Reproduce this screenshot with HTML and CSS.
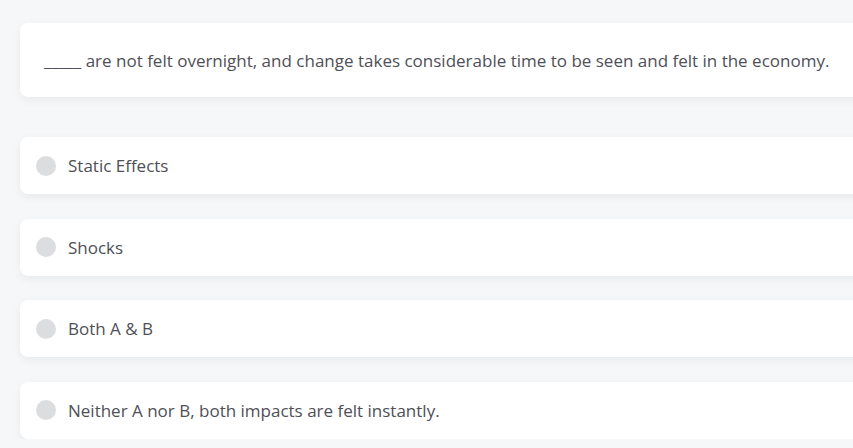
FILE: index.html
```html
<!DOCTYPE html>
<html>
<head>
<meta charset="utf-8">
<link rel="stylesheet" href="styles.css">
</head>
<body>
<main class="quiz">
  <section class="question">
    <p class="question-text">_____ are not felt overnight, and change takes considerable time to be seen and felt in the economy.</p>
  </section>
  <ul class="options">
    <li class="option"><span class="radio"></span><span class="label">Static Effects</span></li>
    <li class="option"><span class="radio"></span><span class="label">Shocks</span></li>
    <li class="option"><span class="radio"></span><span class="label">Both A &amp; B</span></li>
    <li class="option"><span class="radio"></span><span class="label">Neither A nor B, both impacts are felt instantly.</span></li>
  </ul>
</main>
</body>
</html>
```

FILE: styles.css
```css
html, body {
  margin: 0;
  padding: 0;
  background: #f6f7f9;
  overflow: hidden;
}
body {
  font-family: "Open Sans", "Noto Sans", sans-serif;
  color: #4f4f57;
  font-size: 17px;
}
.quiz {
  padding: 23px 0 0 20px;
}
.question {
  background: #fff;
  border-radius: 8px;
  margin-right: -20px;
  height: 74px;
  display: flex;
  align-items: center;
  padding-left: 24px;
  box-shadow: 0 3px 10px rgba(0, 0, 0, 0.06);
}
.question-text {
  margin: 0;
  white-space: nowrap;
}
.options {
  list-style: none;
  margin: 40px 0 0 0;
  padding: 0;
  display: flex;
  flex-direction: column;
  gap: 24.5px;
}
.option {
  background: #fff;
  border-radius: 8px;
  margin-right: -20px;
  height: 57px;
  display: flex;
  align-items: center;
  padding-left: 16px;
  gap: 12px;
  box-shadow: 0 3px 10px rgba(0, 0, 0, 0.06);
}
.radio {
  width: 20px;
  height: 20px;
  border-radius: 50%;
  background: #dcdddf;
  flex: none;
}
```
